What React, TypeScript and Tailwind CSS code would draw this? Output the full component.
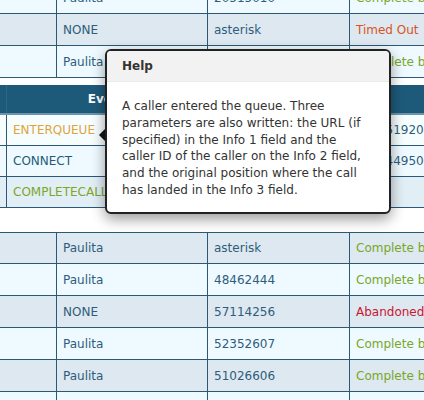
import React from 'react'

type Cell = { text: string; color?: string }
type Row = { cells: Cell[]; bg: string }

const DARK = 'bg-[#dde8f0]'
const LIGHT = 'bg-[#eefaff]'
const GREEN = 'text-[#7aa62a]'

const topRows: Row[] = [
  { bg: LIGHT, cells: [{ text: '' }, { text: 'Paulita' }, { text: '20515010' }, { text: 'Complete by Caller', color: GREEN }] },
  { bg: DARK, cells: [{ text: '' }, { text: 'NONE' }, { text: 'asterisk' }, { text: 'Timed Out', color: 'text-[#d9531e]' }] },
  { bg: LIGHT, cells: [{ text: '' }, { text: 'Paulita' }, { text: '20515010' }, { text: 'Complete by Caller', color: GREEN }] },
]

const bottomRows: Row[] = [
  { bg: DARK, cells: [{ text: '' }, { text: 'Paulita' }, { text: 'asterisk' }, { text: 'Complete by Agent', color: GREEN }] },
  { bg: LIGHT, cells: [{ text: '' }, { text: 'Paulita' }, { text: '48462444' }, { text: 'Complete by Caller', color: GREEN }] },
  { bg: DARK, cells: [{ text: '' }, { text: 'NONE' }, { text: '57114256' }, { text: 'Abandoned', color: 'text-[#cc1530]' }] },
  { bg: LIGHT, cells: [{ text: '' }, { text: 'Paulita' }, { text: '52352607' }, { text: 'Complete by Caller', color: GREEN }] },
  { bg: DARK, cells: [{ text: '' }, { text: 'Paulita' }, { text: '51026606' }, { text: 'Complete by Agent', color: GREEN }] },
  { bg: LIGHT, cells: [{ text: '' }, { text: 'Paulita' }, { text: '48462444' }, { text: 'Complete by Caller', color: GREEN }] },
]

const widths = ['w-[57px]', 'w-[151px]', 'w-[142px]', 'w-[120px]']

function CallRow({ row, top }: { row: Row; top?: boolean }) {
  return (
    <div className={`flex h-[32px] border-b border-[#2b5874] ${top ? 'border-t' : ''} ${row.bg}`}>
      {row.cells.map((c, i) => (
        <div
          key={i}
          className={`${widths[i]} shrink-0 flex items-center px-[6px] whitespace-nowrap overflow-hidden ${i < 3 ? 'border-r border-[#2b5874]' : ''} ${c.color ?? 'text-[#2e5d7b]'}`}
        >
          {c.text}
        </div>
      ))}
    </div>
  )
}

const events = [
  { name: 'ENTERQUEUE', color: 'text-[#e0a43c]', bg: 'bg-[#f6fdff]', info: '1441519200' },
  { name: 'CONNECT', color: 'text-[#1f5a78]', bg: LIGHT, info: '1441449500' },
  { name: 'COMPLETECALL', color: 'text-[#7aa62a]', bg: 'bg-[#e2eef5]', info: '' },
]

export default function App() {
  return (
    <div className="relative w-[424px] h-[400px] overflow-hidden bg-white text-[12px] font-['DejaVu_Sans',Verdana,sans-serif]">
      <div className="-mt-[18px] w-[480px]">
        {topRows.map((r, i) => (
          <CallRow key={i} row={r} top={i === 0} />
        ))}
      </div>

      <div className="mt-[7px] w-[480px]">
        <div className="flex h-[30px] bg-[#1d5a7a] border-b-2 border-[#6a93ad] text-white font-bold">
          <div className="w-[7px] shrink-0 border-r border-[#2a6888]" />
          <div className="w-[200px] shrink-0 flex items-center justify-center">Event</div>
          <div className="w-[142px] shrink-0" />
          <div className="w-[120px] shrink-0" />
        </div>
        {events.map((e) => (
          <div key={e.name} className={`flex h-[31px] border-b border-[#2b5874] ${e.bg}`}>
            <div className="w-[7px] shrink-0 border-r border-[#2b5874]" />
            <div className={`w-[200px] shrink-0 flex items-center px-[6px] ${e.color}`}>{e.name}</div>
            <div className="w-[142px] shrink-0 flex items-center px-[6px] text-[#2e5d7b]" />
            <div className="w-[120px] shrink-0 flex items-center px-[6px] whitespace-nowrap text-[#2e5d7b]">{e.info}</div>
          </div>
        ))}
      </div>

      <div className="mt-[24px] w-[480px]">
        {bottomRows.map((r, i) => (
          <CallRow key={i} row={r} top={i === 0} />
        ))}
      </div>

      <div className="absolute left-[105px] top-[49px] w-[286px] h-[165px] rounded-[6px] border-2 border-[#222] bg-white shadow-[0_5px_14px_rgba(0,0,0,0.4)] text-[#333]">
        <div className="absolute -left-[8px] top-[78px] w-0 h-0 border-y-[6px] border-y-transparent border-r-[6px] border-r-[#111]" />
        <div className="h-[31px] flex items-center px-[15px] bg-[#f3f2f2] rounded-t-[4px] border-b border-[#ebebeb] font-bold">
          Help
        </div>
        <div className="pl-[15px] pr-[24px] pt-[16px] leading-[16.8px]">
          A caller entered the queue. Three parameters are also written: the URL (if specified) in the Info 1 field and the caller ID of the caller on the Info 2 field, and the original position where the call has landed in the Info 3 field.
        </div>
      </div>
    </div>
  )
}
